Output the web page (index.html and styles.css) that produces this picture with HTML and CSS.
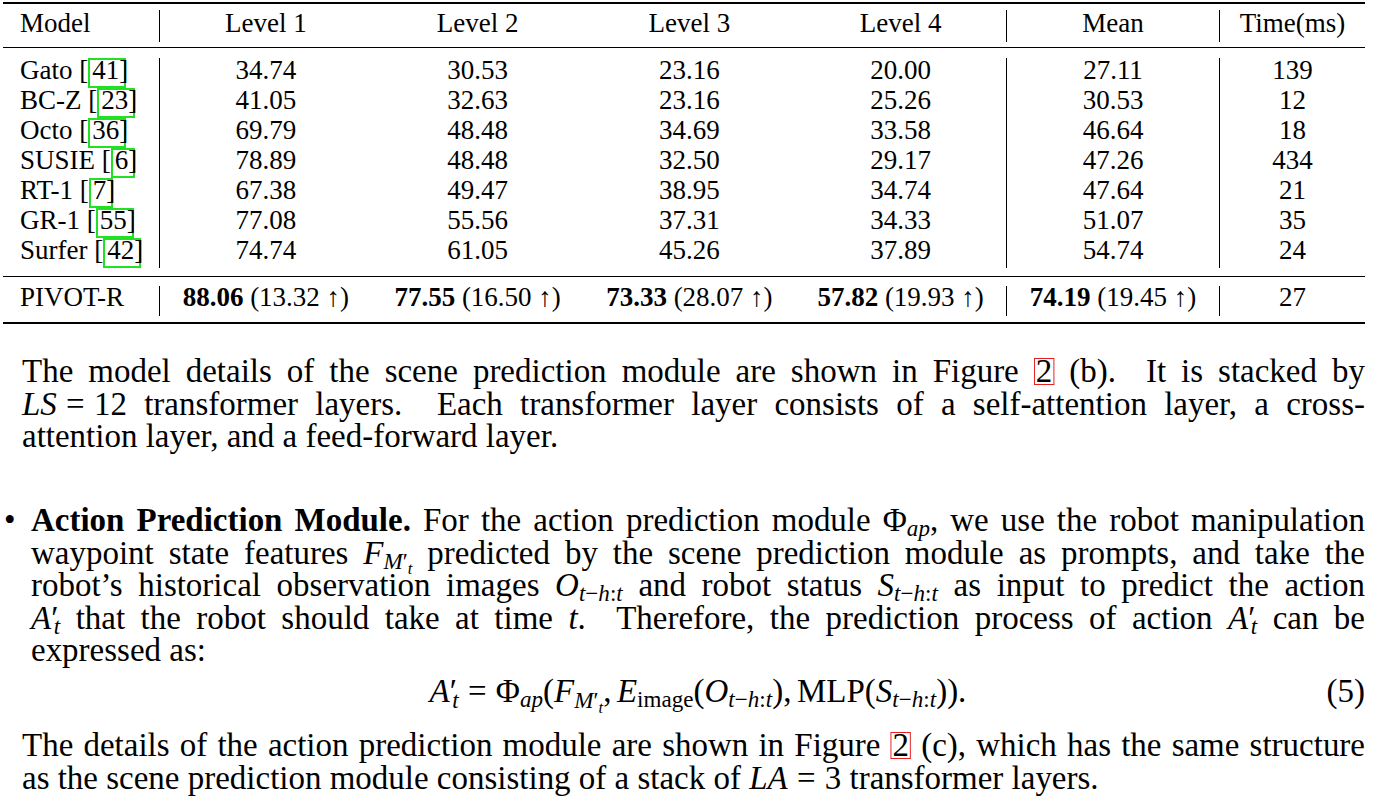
FILE: index.html
```html
<!DOCTYPE html>
<html lang="en">
<head>
<meta charset="utf-8">
<title>PIVOT-R results</title>
<link rel="stylesheet" href="styles.css">
</head>
<body>
<div class="page">
  <div class="tbl">
    <div class="rule thick"></div>
    <div class="grid head">
      <div class="model bar">Model</div>
      <div>Level 1</div>
      <div>Level 2</div>
      <div>Level 3</div>
      <div class="bar">Level 4</div>
      <div class="bar">Mean</div>
      <div>Time(ms)</div>
    </div>
    <div class="rule hair mid"></div>
    <div class="grid rows">
      <div class="model bar">Gato [<span class="cite">41<span class="rb">]</span></span></div>
      <div>34.74</div><div>30.53</div><div>23.16</div><div class="bar">20.00</div><div class="bar">27.11</div><div>139</div>

      <div class="model bar">BC-Z [<span class="cite">23<span class="rb">]</span></span></div>
      <div>41.05</div><div>32.63</div><div>23.16</div><div class="bar">25.26</div><div class="bar">30.53</div><div>12</div>

      <div class="model bar">Octo [<span class="cite">36<span class="rb">]</span></span></div>
      <div>69.79</div><div>48.48</div><div>34.69</div><div class="bar">33.58</div><div class="bar">46.64</div><div>18</div>

      <div class="model bar">SUSIE [<span class="cite">6<span class="rb">]</span></span></div>
      <div>78.89</div><div>48.48</div><div>32.50</div><div class="bar">29.17</div><div class="bar">47.26</div><div>434</div>

      <div class="model bar">RT-1 [<span class="cite">7<span class="rb">]</span></span></div>
      <div>67.38</div><div>49.47</div><div>38.95</div><div class="bar">34.74</div><div class="bar">47.64</div><div>21</div>

      <div class="model bar">GR-1 [<span class="cite">55<span class="rb">]</span></span></div>
      <div>77.08</div><div>55.56</div><div>37.31</div><div class="bar">34.33</div><div class="bar">51.07</div><div>35</div>

      <div class="model bar">Surfer [<span class="cite">42<span class="rb">]</span></span></div>
      <div>74.74</div><div>61.05</div><div>45.26</div><div class="bar">37.89</div><div class="bar">54.74</div><div>24</div>
    </div>
    <div class="rule hair after-rows"></div>
    <div class="grid pivot">
      <div class="model bar">PIVOT-R</div>
      <div><b>88.06</b> (13.32 ↑)</div>
      <div><b>77.55</b> (16.50 ↑)</div>
      <div><b>73.33</b> (28.07 ↑)</div>
      <div class="bar"><b>57.82</b> (19.93 ↑)</div>
      <div class="bar"><b>74.19</b> (19.45 ↑)</div>
      <div>27</div>
    </div>
    <div class="rule thick bottom"></div>
  </div>

  <div class="prose">
    <div class="para p1">
      <span class="ln">The model details of the scene prediction module are shown in Figure <span class="ref">2</span> (b).&nbsp; It is stacked by</span>
      <span class="ln"><i>LS</i><span class="op">=</span>12 transformer layers.&nbsp; Each transformer layer consists of a self-attention layer, a cross-</span>
      <span class="ln last">attention layer, and a feed-forward layer.</span>
    </div>

    <div class="item">
      <span class="bullet">•</span>
      <div class="itext">
        <span class="ln"><b>Action Prediction Module.</b> For the action prediction module Φ<sub><i>ap</i></sub>, we use the robot manipulation</span>
        <span class="ln">waypoint state features <i>F</i><sub><i>M</i>′<sub class="s2"><i>t</i></sub></sub> predicted by the scene prediction module as prompts, and take the</span>
        <span class="ln">robot’s historical observation images <i>O</i><sub><i>t</i>−<i>h</i>:<i>t</i></sub> and robot status <i>S</i><sub><i>t</i>−<i>h</i>:<i>t</i></sub> as input to predict the action</span>
        <span class="ln"><i>A</i>′<sub class="pt"><i>t</i></sub> that the robot should take at time <i>t</i>.&nbsp; Therefore, the prediction process of action <i>A</i>′<sub class="pt"><i>t</i></sub> can be</span>
        <span class="ln last">expressed as:</span>
        <div class="eqrow">
          <span></span>
          <span class="eqn"><i>A</i>′<sub class="pt"><i>t</i></sub><span class="op">=</span>Φ<sub><i>ap</i></sub>(<i>F</i><sub><i>M</i>′<sub class="s2"><i>t</i></sub></sub>,<span class="tsp"></span><i>E</i><sub>image</sub>(<i>O</i><sub><i>t</i>−<i>h</i>:<i>t</i></sub>),<span class="tsp"></span>MLP(<i>S</i><sub><i>t</i>−<i>h</i>:<i>t</i></sub>)).</span>
          <span class="tag">(5)</span>
        </div>
      </div>
    </div>

    <div class="para p2">
      <span class="ln">The details of the action prediction module are shown in Figure <span class="ref">2</span> (c), which has the same structure</span>
      <span class="ln last">as the scene prediction module consisting of a stack of <i>LA</i><span class="op">=</span>3 transformer layers.</span>
    </div>
  </div>
</div>
</body>
</html>
```

FILE: styles.css
```css
html, body {
  margin: 0;
  padding: 0;
  background: #ffffff;
}

body {
  width: 1377px;
  height: 808px;
  overflow: hidden;
  font-family: "Liberation Serif", "Times New Roman", serif;
  color: #000;
}

/* ---------- table ---------- */
.tbl {
  margin: 2px 0 0 3px;
  width: 1362px;
  font-size: 27px;
}

.rule { background: #000; }
.rule.thick { height: 2px; }
.rule.hair { height: 1px; }
.rule.mid { margin-top: 5px; }
.rule.after-rows { margin-top: 8px; }
.rule.bottom { margin-top: 6px; }

.grid {
  display: grid;
  grid-template-columns: 157px repeat(4, 211.75px) 213px 145px;
  text-align: center;
}

.head { margin-top: 6px; }
.head > div { height: 32px; line-height: 27.8px; }

.rows { margin-top: 10px; }
.rows > div { height: 30px; line-height: 25.8px; }

.pivot { margin-top: 9px; }
.pivot > div { height: 30px; line-height: 23.8px; }

.model { text-align: left; padding-left: 17px; }
.bar { border-right: 1px solid #000; }

.cite {
  display: inline-block;
  border: 2px solid #22e022;
  line-height: 20px;
  padding: 0 1px 6px 2px;
  margin: -4px 0 -10px 0;
}
.cite .rb { margin-right: -5px; }

/* ---------- prose ---------- */
.prose {
  --sx: 0.97;
  width: calc(1377px / var(--sx));
  margin-top: 31.3px;
  transform: scaleX(var(--sx));
  transform-origin: 0 0;
  font-size: 34px;
  line-height: 32.5px;
}

.ln {
  display: block;
  text-align: justify;
  text-align-last: justify;
}
.ln.last { text-align-last: left; }

.para {
  padding-left: calc(22px / var(--sx));
  width: calc(1343px / var(--sx));
}
.p2 { margin-top: 21.5px; }

.item {
  display: flex;
  margin-top: 51.5px;
  width: calc(1365px / var(--sx));
}
.bullet {
  width: calc(31px / var(--sx));
  flex: none;
  padding-left: 4px;
  box-sizing: border-box;
}
.itext { flex: 1; }

sub {
  font-size: 0.7em;
  vertical-align: -0.22em;
  line-height: 0;
}
sub.s2 { font-size: 0.72em; vertical-align: -0.3em; }
sub.pt { margin-left: -0.2em; }

.op { margin: 0 0.28em; }
.tsp { display: inline-block; width: 0.17em; }

.ref {
  display: inline-block;
  border: 1.5px solid #e61e1e;
  line-height: 23px;
  padding: 0 1px 2px;
}

.eqrow {
  display: grid;
  grid-template-columns: 1fr auto 1fr;
  margin-top: 8.5px;
}
.eqn { white-space: nowrap; }
.tag { justify-self: end; }
```
